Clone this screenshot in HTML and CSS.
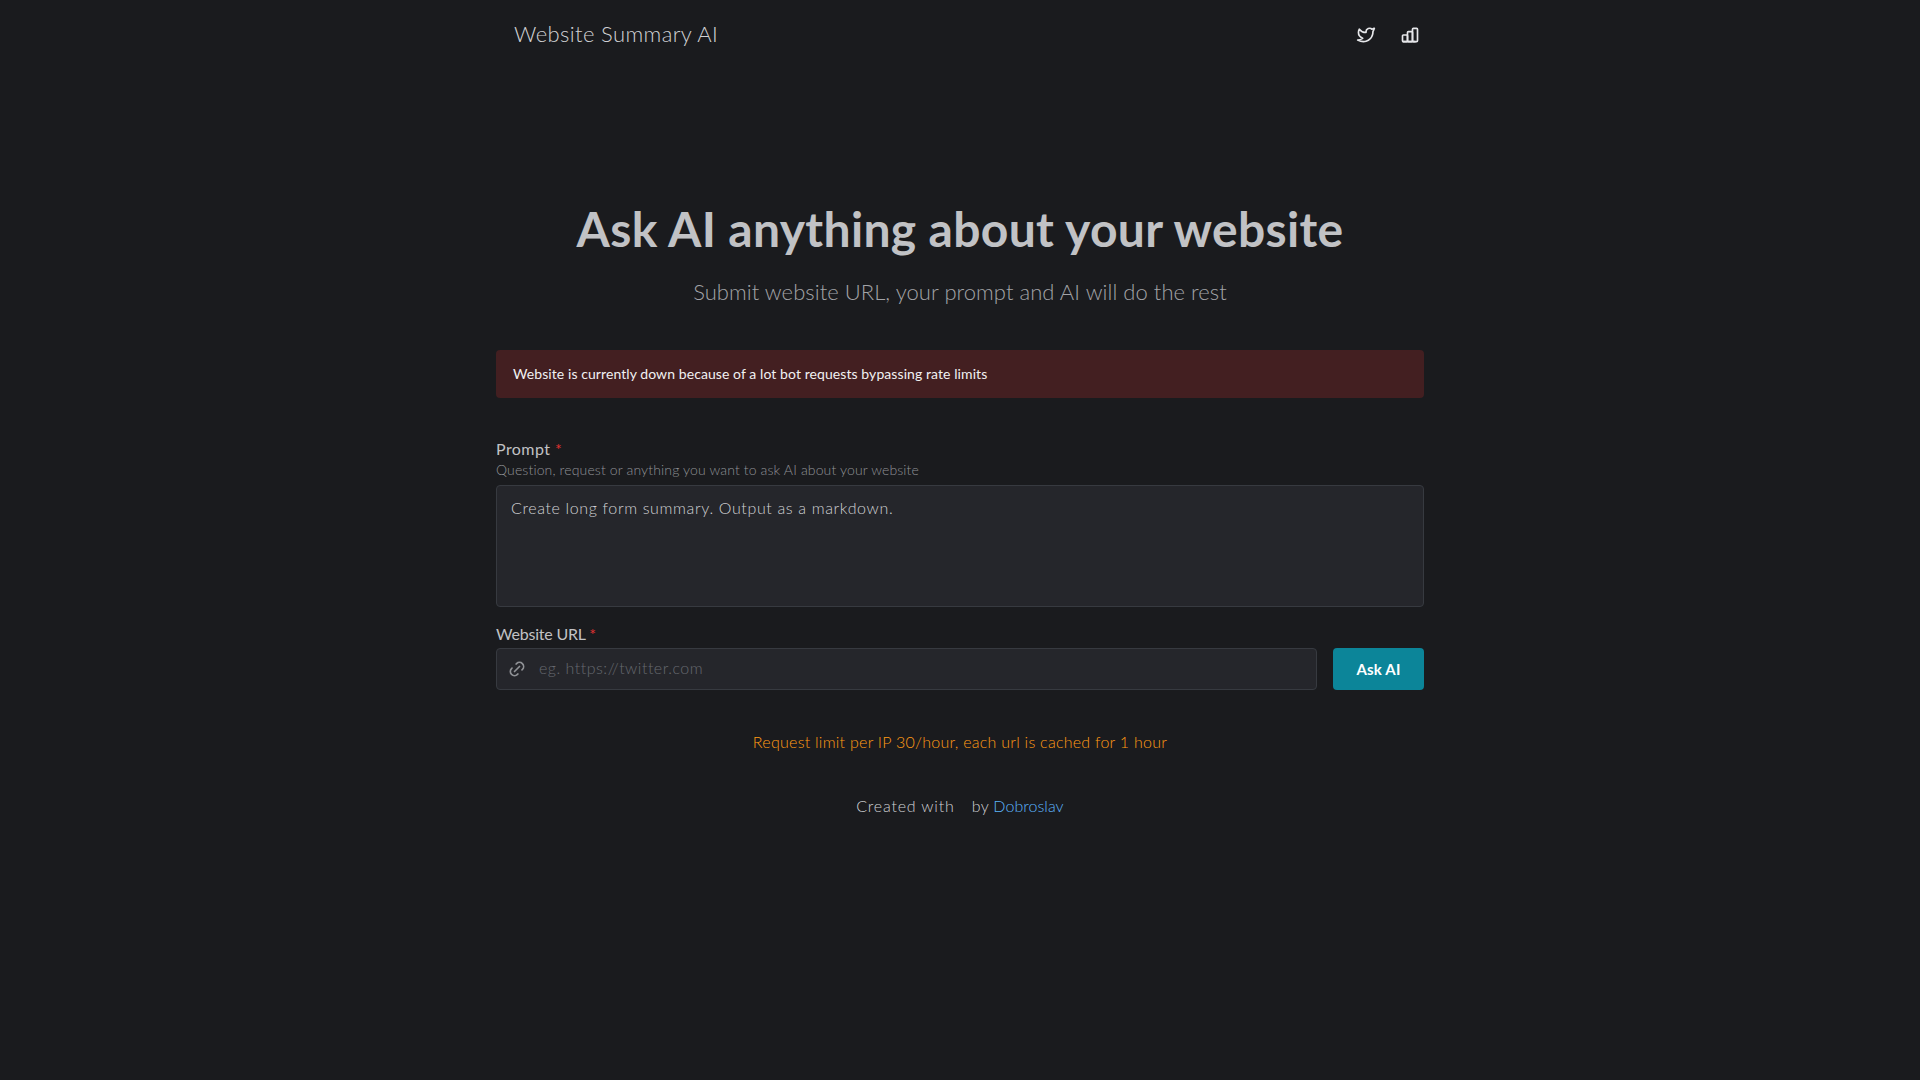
FILE: index.html
```html
<!DOCTYPE html>
<html lang="en">
<head>
<meta charset="utf-8">
<title>Website Summary AI</title>
<link rel="stylesheet" href="styles.css">
</head>
<body>
<div class="page">
  <header class="header">
    <span class="brand">Website Summary AI</span>
    <nav class="nav">
      <a class="nav-icon" href="#" aria-label="Twitter">
        <svg width="20" height="20" viewBox="0 0 24 24" fill="none" stroke="currentColor" stroke-width="2" stroke-linecap="round" stroke-linejoin="round"><path d="M22 4.01c-1 .49-1.99.689-3 .99-1.11-1.25-2.75-1.32-4.33-.73S11.99 6.01 12 8v1c-3.21.08-6.06-1.38-8-4 0 0-4.14 7.36 4 11-1.86 1.24-3.72 2.08-6 2 3.33 1.82 6.97 2.44 10.11 1.52 3.6-1.05 6.56-3.74 7.7-7.77.34-1.23.5-2.49.49-3.77 0-.25 1.51-2.77 1.7-3.98z"/></svg>
      </a>
      <a class="nav-icon" href="#" aria-label="Stats">
        <svg width="20" height="20" viewBox="0 0 24 24" fill="none" stroke="currentColor" stroke-width="2" stroke-linecap="round" stroke-linejoin="round"><rect x="3" y="12" width="6" height="8" rx="1"/><rect x="9" y="8" width="6" height="12" rx="1"/><rect x="15" y="4" width="6" height="16" rx="1"/><path d="M4 20h14"/></svg>
      </a>
    </nav>
  </header>
  <main class="main">
    <h1 class="title">Ask AI anything about your website</h1>
    <p class="subtitle">Submit website URL, your prompt and AI will do the rest</p>
    <div class="alert">Website is currently down because of a lot bot requests bypassing rate limits</div>
    <form class="form">
      <label class="label">Prompt <span class="req">*</span></label>
      <div class="desc">Question, request or anything you want to ask AI about your website</div>
      <div class="textarea">Create long form summary. Output as a markdown.</div>
      <label class="label label-url">Website URL <span class="req">*</span></label>
      <div class="url-row">
        <div class="input">
          <svg class="link-icon" width="20" height="20" viewBox="0 0 24 24" fill="none" stroke="currentColor" stroke-width="2" stroke-linecap="round" stroke-linejoin="round"><path d="M9 15l6-6"/><path d="M11 6l.46-.54a5 5 0 0 1 7.07 7.07L18 13"/><path d="M13 18l-.4.54a5.07 5.07 0 0 1-7.12 0 4.97 4.97 0 0 1 0-7.07L6 11"/></svg>
          <span class="placeholder">eg. https://twitter.com</span>
        </div>
        <button class="button" type="button">Ask AI</button>
      </div>
    </form>
    <p class="limit">Request limit per IP 30/hour, each url is cached for 1 hour</p>
    <p class="credit"><span class="credit-lead">Created with</span> <span class="heart"></span> by <a href="#" class="credit-link">Dobroslav</a></p>
  </main>
</div>
</body>
</html>
```

FILE: styles.css
```css
* { box-sizing: border-box; }
html, body { margin: 0; height: 100%; }
body {
  background: #1a1b1e;
  color: #c1c2c5;
  font-family: Lato, "Noto Sans", sans-serif;
}
.page { width: 928px; margin: 0 auto; }
.header {
  height: 70px;
  display: flex;
  align-items: center;
  justify-content: space-between;
  padding-left: 18px;
}
.brand { font-size: 22px; line-height: 28px; margin-bottom: 3px; font-weight: 300; letter-spacing: 0.38px; color: #d0d1d4; }
.nav { display: flex; gap: 24px; padding-right: 4px; }
.nav-icon { color: #e6e7ea; display: flex; }
.main { padding-top: 127px; }
.title {
  margin: 0;
  text-align: center;
  font-size: 48px;
  line-height: 64px;
  font-weight: 700;
  letter-spacing: 0.33px;
  color: #c1c2c5;
}
.subtitle {
  margin: 16px 0 0;
  text-align: center;
  font-size: 22px;
  line-height: 30px;
  font-weight: 300;
  letter-spacing: 0.05px;
  color: #a2a3a7;
}
.alert {
  margin-top: 43px;
  height: 48px;
  display: flex;
  align-items: center;
  padding: 0 17px 2px;
  background: #431f21;
  border-radius: 4px;
  font-size: 14px;
  letter-spacing: 0.08px;
  color: #f1f1f2;
}
.form { margin-top: 41px; }
.label { display: block; font-size: 16px; line-height: 20px; letter-spacing: 0.45px; color: #c1c2c5; font-weight: 400; }
.req { color: #e03131; }
.desc { font-size: 14px; line-height: 19px; letter-spacing: 0.14px; color: #909296; margin-top: 1px; font-weight: 300; }
.textarea {
  margin-top: 6px;
  height: 122px;
  padding: 12px 14px;
  background: #25262b;
  border: 1px solid #373a40;
  border-radius: 4px;
  font-size: 16px;
  line-height: 20px;
  letter-spacing: 0.64px;
  font-weight: 300;
  color: #d0d1d4;
}
.label-url { margin-top: 17px; letter-spacing: -0.2px; }
.url-row { display: flex; gap: 16px; margin-top: 4px; }
.input {
  flex: 1;
  height: 42px;
  display: flex;
  align-items: center;
  gap: 12px;
  padding-left: 10px;
  background: #25262b;
  border: 1px solid #373a40;
  border-radius: 4px;
}
.link-icon { color: #909296; }
.placeholder { font-size: 16px; line-height: 20px; margin-bottom: 2px; font-weight: 300; letter-spacing: 0.5px; color: #66696f; }
.button {
  width: 91px;
  height: 42px;
  border: 0;
  border-radius: 4px;
  background: #0c8599;
  color: #fff;
  font: 700 15px Lato, "Noto Sans", sans-serif;
  letter-spacing: 0.2px;
}
.limit {
  margin: 40px 0 0;
  text-align: center;
  font-size: 16px;
  line-height: 24px;
  font-weight: 300;
  letter-spacing: 0.26px;
  color: #ff9a14;
}
.credit {
  margin: 40px 0 0;
  text-align: center;
  font-size: 16px;
  line-height: 24px;
  font-weight: 300;
  letter-spacing: 0.3px;
  color: #d0d1d4;
}
.credit-lead { letter-spacing: 0.8px; }
.heart { display: inline-block; width: 8px; }
.credit-link { color: #5cb4fa; text-decoration: none; letter-spacing: 0.05px; }
```
